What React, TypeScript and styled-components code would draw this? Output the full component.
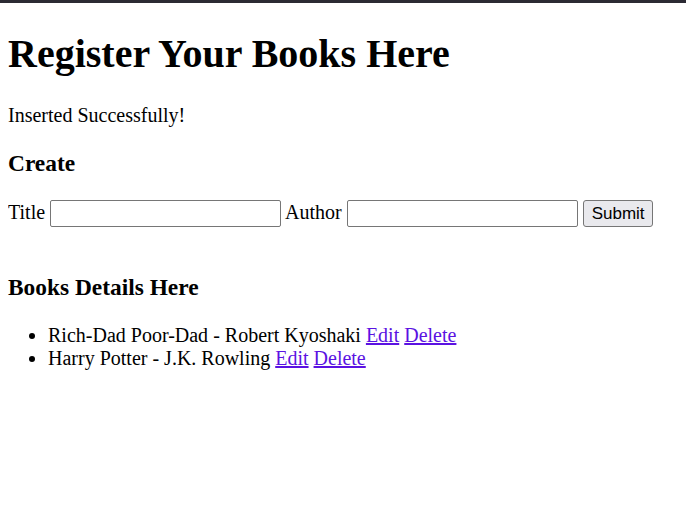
import React, { useState } from 'react';
import styled, { createGlobalStyle } from 'styled-components';

interface Book {
	id: number;
	title: string;
	author: string;
}

const GlobalStyle = createGlobalStyle`
	html {
		border-top: 3px solid #2b2a33;
		background: #fff;
	}

	body {
		display: flow-root;
		margin: 8px;
		font-family: 'Liberation Serif', 'Times New Roman', serif;
		font-size: 20px;
		color: #000;
	}
`;

const books: Book[] = [
	{ id: 1, title: 'Rich-Dad Poor-Dad', author: 'Robert Kyoshaki' },
	{ id: 2, title: 'Harry Potter', author: 'J.K. Rowling' },
];

const App: React.FunctionComponent = () => {
	const [title, setTitle] = useState('');
	const [author, setAuthor] = useState('');

	return (
		<>
			<GlobalStyle />
			<Heading>Register Your Books Here</Heading>
			<Message>Inserted Successfully!</Message>
			<SubHeading>Create</SubHeading>
			<Form onSubmit={e => e.preventDefault()}>
				Title <TextInput value={title} onChange={e => setTitle(e.target.value)} />
				{' '}Author <TextInput value={author} onChange={e => setAuthor(e.target.value)} />
				{' '}<SubmitButton type={'submit'}>{'Submit'}</SubmitButton>
			</Form>
			<br />
			<SubHeading>Books Details Here</SubHeading>
			<BookList>
				{books.map(b => (
					<li key={b.id}>
						{b.title} - {b.author} <Link href={'#'}>Edit</Link> <Link href={'#'}>Delete</Link>
					</li>
				))}
			</BookList>
		</>
	);
};

const Heading = styled.h1`
	font-size: 2em;
	font-weight: bold;
	margin: 18.8px 0 0.67em;
`;

const Message = styled.p`
	margin: 1em 0;
`;

const SubHeading = styled.h3`
	font-size: 1.17em;
	font-weight: bold;
	margin: 1em 0;
`;

const Form = styled.form`
	margin: 0;
`;

const TextInput = styled.input`
	box-sizing: border-box;
	width: 231px;
	height: 27px;
	padding: 2px 4px;
	border: 1px solid #767676;
	border-radius: 2px;
	background: #fff;
	font-family: 'Liberation Sans', Arial, sans-serif;
	font-size: 16px;
	vertical-align: baseline;
`;

const SubmitButton = styled.button`
	box-sizing: border-box;
	width: 70px;
	height: 27px;
	padding: 0 8px;
	border: 1px solid #767676;
	border-radius: 3px;
	background: #e9e9ed;
	color: #000;
	font-family: 'Liberation Sans', Arial, sans-serif;
	font-size: 17px;
`;

const BookList = styled.ul`
	margin: 1em 0;
	padding-left: 40px;
`;

const Link = styled.a`
	color: #5b12e2;
	text-decoration: underline;
`;

export default App;
